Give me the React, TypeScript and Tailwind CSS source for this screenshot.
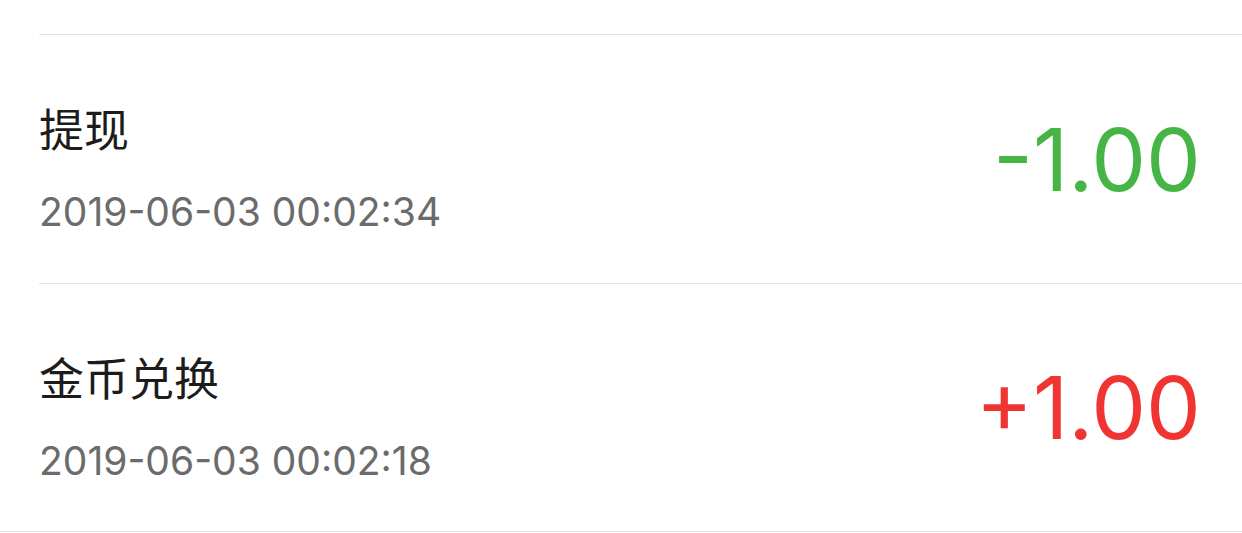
const records = [
  { title: '提现', time: '2019-06-03 00:02:34', amount: '-1.00', income: false },
  { title: '金币兑换', time: '2019-06-03 00:02:18', amount: '+1.00', income: true },
];

export default function App() {
  return (
    <div
      className="w-[1242px] h-[533px] bg-white overflow-hidden"
      style={{ fontFamily: 'Inter, "Noto Sans CJK SC", sans-serif' }}
    >
      <div className="pt-[34px] border-b border-[#e3e3e3]">
        {records.map((r, i) => (
          <div
            key={r.time}
            className={`ml-[39px] border-t border-[#e3e3e3] flex items-center justify-between pr-[41px] ${
              i === 0 ? 'h-[249px]' : 'h-[248px]'
            }`}
          >
            <div className="self-start pt-[66px]">
              <div className="text-[45px] leading-[60px] text-[#1c1c1c]">{r.title}</div>
              <div className="mt-[27px] text-[39px] leading-[48px] text-[#6b6b6b]">{r.time}</div>
            </div>
            <div
              className={`text-[87px] leading-none ${
                r.income ? 'text-[#ef3432]' : 'text-[#46b546]'
              }`}
            >
              {r.amount}
            </div>
          </div>
        ))}
      </div>
    </div>
  );
}
